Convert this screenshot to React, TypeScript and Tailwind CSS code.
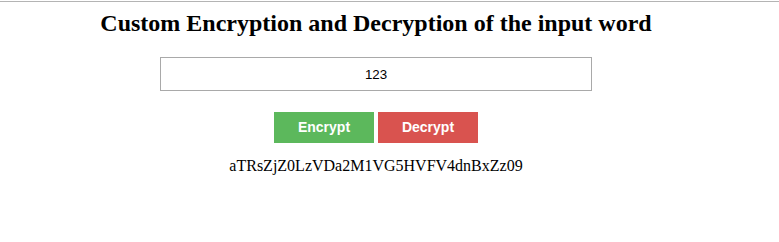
import React, {useState} from "react";

const App: React.FC = () => {
  const [word, setWord] = useState<string>("123");
  const [result] = useState<string>("aTRsZjZ0LzVDa2M1VG5HVFV4dnBxZz09");

  return (
    <div className="min-h-[242px] bg-white">
      <div className="mt-px border-t border-[#b4b4b4]" />
      <div className="w-[752px] flex flex-col items-center">
        <h1 className="mt-[7px] text-[24px] leading-[28px] font-bold text-black font-['Liberation_Serif','Times_New_Roman',serif]">
          Custom Encryption and Decryption of the input word
        </h1>

        <input
          type="text"
          value={word}
          onChange={(e) => setWord(e.target.value)}
          className="mt-[20px] w-[432px] h-[34px] border border-[#a9a9a9] bg-white text-center text-[13.33px] text-black outline-none font-['Liberation_Sans',Arial,sans-serif]"
        />

        <div className="mt-[21px] flex gap-[4px]">
          <button className="w-[100px] h-[31px] bg-[#5cb85c] text-white font-bold text-[14px] font-['Liberation_Sans',Arial,sans-serif]">
            Encrypt
          </button>
          <button className="w-[100px] h-[31px] bg-[#d9534f] text-white font-bold text-[14px] font-['Liberation_Sans',Arial,sans-serif]">
            Decrypt
          </button>
        </div>

        <p className="mt-[13px] text-[16px] leading-[20px] text-black font-['Liberation_Serif','Times_New_Roman',serif]">
          {result}
        </p>
      </div>
    </div>
  );
};

export default App;
